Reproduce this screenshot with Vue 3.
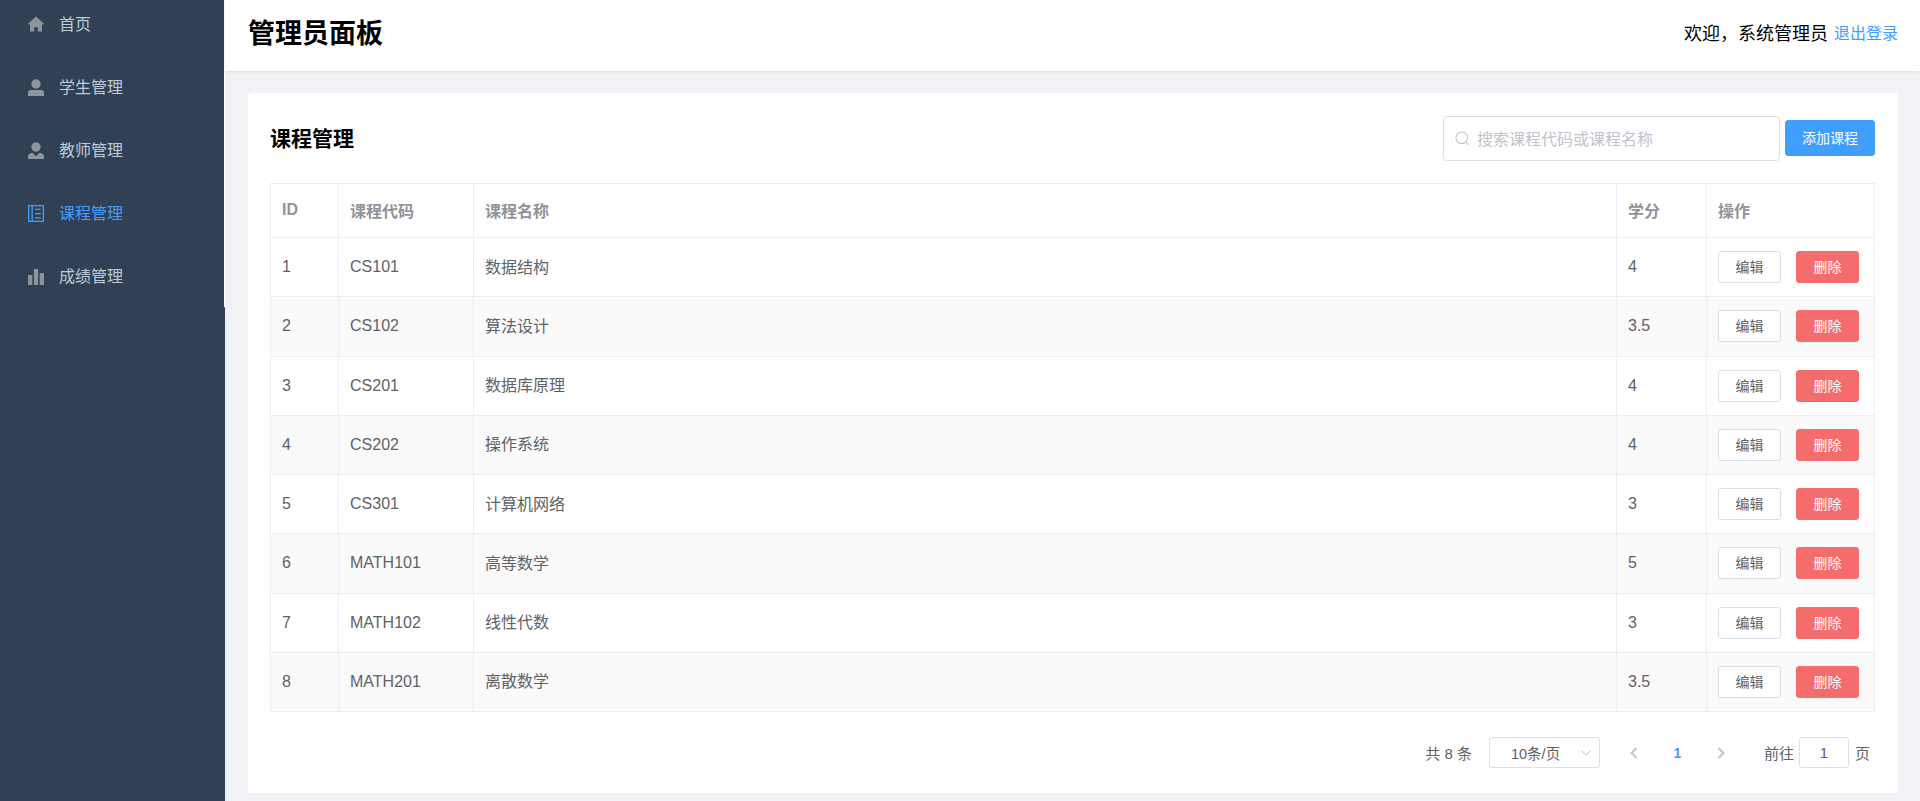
<script setup>
const menus = [
  { name: '首页', icon: 'home' },
  { name: '学生管理', icon: 'user' },
  { name: '教师管理', icon: 'teacher' },
  { name: '课程管理', icon: 'book', active: true },
  { name: '成绩管理', icon: 'chart' }
]
const courses = [
  { id: 1, code: 'CS101', name: '数据结构', credit: 4 },
  { id: 2, code: 'CS102', name: '算法设计', credit: 3.5 },
  { id: 3, code: 'CS201', name: '数据库原理', credit: 4 },
  { id: 4, code: 'CS202', name: '操作系统', credit: 4 },
  { id: 5, code: 'CS301', name: '计算机网络', credit: 3 },
  { id: 6, code: 'MATH101', name: '高等数学', credit: 5 },
  { id: 7, code: 'MATH102', name: '线性代数', credit: 3 },
  { id: 8, code: 'MATH201', name: '离散数学', credit: 3.5 }
]
</script>

<template>
  <div class="layout">
    <aside class="sidebar">
      <ul class="menu">
        <li v-for="m in menus" :key="m.name" class="menu-item" :class="{ active: m.active }">
          <svg class="menu-icon" viewBox="0 0 16 17">
            <path v-if="m.icon === 'home'" d="M8 .5 15.800 7.500c.3.3.2.8-.2.8H14V15.500H9.800V11.300H6.200V15.500H2V8.300H.4c-.4 0-.5-.5-.2-.8z" />
            <template v-else-if="m.icon === 'user'">
              <circle cx="8" cy="5" r="4.700" />
              <path d="M3 11h10c1.800 0 3 1.200 3 3v3H0v-3c0-1.800 1.200-3 3-3z" />
            </template>
            <template v-else-if="m.icon === 'teacher'">
              <circle cx="8" cy="5" r="4.700" />
              <path d="M4.500 10.800 8 14.200l3.500-3.400c2.800.5 4.500 1.800 4.500 3.700V17H0v-2.500c0-1.900 1.700-3.200 4.500-3.700z" />
            </template>
            <path v-else-if="m.icon === 'book'" fill-rule="evenodd" d="M0 0h16v17H0zM1.300 1.300v14.400h2.200V1.300zM4.800 1.300v14.400h9.900V1.300zM7 3.700h5.700v1.300H7zM7 8h5.700v1.300H7zM7 12.200h5.700v1.300H7z" />
            <path v-else d="M0 7h4.300v10H0zM5.900 1h4.200v16H5.900zM11.700 5H16v12h-4.300z" />
          </svg>
          <span>{{ m.name }}</span>
        </li>
      </ul>
    </aside>
    <div class="right">
      <header class="topbar">
        <h1>管理员面板</h1>
        <div class="user">
          <span>欢迎，系统管理员</span>
          <a>退出登录</a>
        </div>
      </header>
      <main class="content">
        <section class="card">
          <div class="card-head">
            <h2>课程管理</h2>
            <div class="tools">
              <div class="search">
                <svg viewBox="0 0 16 16" class="search-icon">
                  <circle cx="7.200" cy="7.200" r="6.200" />
                  <path d="m11.800 11.800 3.200 3.200" />
                </svg>
                <span>搜索课程代码或课程名称</span>
              </div>
              <button class="btn primary">添加课程</button>
            </div>
          </div>
          <table class="table">
            <colgroup>
              <col style="width: 68px" />
              <col style="width: 135px" />
              <col />
              <col style="width: 90px" />
              <col style="width: 168px" />
            </colgroup>
            <thead>
              <tr>
                <th>ID</th>
                <th>课程代码</th>
                <th>课程名称</th>
                <th>学分</th>
                <th>操作</th>
              </tr>
            </thead>
            <tbody>
              <tr v-for="c in courses" :key="c.id">
                <td>{{ c.id }}</td>
                <td>{{ c.code }}</td>
                <td class="cn">{{ c.name }}</td>
                <td>{{ c.credit }}</td>
                <td>
                  <div class="ops">
                    <button class="btn small">编辑</button>
                    <button class="btn small danger">删除</button>
                  </div>
                </td>
              </tr>
            </tbody>
          </table>
          <div class="pager">
            <span class="total">共 8 条</span>
            <div class="size">
              <span>10条/页</span>
              <svg viewBox="0 0 10 6" class="caret"><path d="m.5.500 4.500 4.500 4.500-4.500" /></svg>
            </div>
            <svg viewBox="0 0 8 12" class="arrow"><path d="M6.500 1 1.500 6l5 5" /></svg>
            <span class="num">1</span>
            <svg viewBox="0 0 8 12" class="arrow"><path d="m1.500 1 5 5-5 5" /></svg>
            <span class="goto">前往</span>
            <span class="jump">1</span>
            <span>页</span>
          </div>
        </section>
      </main>
    </div>
  </div>
</template>

<style>
html, body {
  margin: 0;
  overflow: hidden;
}
</style>

<style scoped>
.layout {
  display: flex;
  height: 809px;
  margin-top: -8px;
  overflow: hidden;
  font-family: "Liberation Sans", "Noto Sans CJK SC", sans-serif;
  background: #f0f2f5;
  color: #606266;
}
.sidebar {
  width: 225px;
  flex: none;
  background: #304156;
  overflow: hidden;
}
.menu {
  list-style: none;
  margin: 0;
  padding: 0;
  border-right: 1px solid #fff;
}
.menu-item {
  height: 63px;
  display: flex;
  align-items: center;
  padding-left: 28px;
  gap: 15px;
  font-size: 16px;
  color: #bfcbd9;
}
.menu-item span {
  margin-bottom: 2px;
}
.menu-item.active {
  color: #409eff;
}
.menu-icon {
  width: 16px;
  height: 17px;
  margin-top: 2px;
  fill: #909399;
}
.active .menu-icon {
  fill: #409eff;
}
.right {
  flex: 1;
  min-width: 0;
  display: flex;
  flex-direction: column;
}
.topbar {
  height: 79px;
  flex: none;
  background: #fff;
  box-shadow: 0 1px 4px rgba(0, 21, 41, 0.08);
  display: flex;
  align-items: center;
  justify-content: space-between;
  padding: 0 22px 0 23px;
  position: relative;
}
.topbar h1 {
  margin: 0;
  font-size: 27px;
  color: #000;
}
.user {
  font-size: 18px;
  color: #000;
  display: flex;
  align-items: center;
  gap: 6px;
}
.user a {
  font-size: 16px;
  color: #409eff;
}
.content {
  padding: 22px 22px 0 23px;
}
.card {
  background: #fff;
  border-radius: 4px;
  height: 700px;
  padding: 0 23px 0 22px;
  box-sizing: border-box;
}
.card-head {
  height: 90px;
  display: flex;
  align-items: center;
  justify-content: space-between;
}
.card-head h2 {
  margin: 0 0 2px;
  font-size: 21px;
  color: #000;
}
.tools {
  display: flex;
  align-items: center;
  gap: 5px;
}
.search {
  width: 337px;
  height: 45px;
  box-sizing: border-box;
  border: 1px solid #dcdfe6;
  border-radius: 4px;
  display: flex;
  align-items: center;
  gap: 7px;
  padding-left: 11px;
  font-size: 16px;
  color: #c0c4cc;
}
.search-icon {
  width: 15px;
  height: 15px;
  fill: none;
  stroke: #c0c4cc;
  stroke-width: 1.2;
}
.btn {
  font-family: inherit;
  border-radius: 3px;
  border: 1px solid #dcdfe6;
  background: #fff;
  color: #606266;
  font-size: 14px;
  padding: 0 0 2px;
  cursor: pointer;
}
.btn.primary {
  width: 90px;
  height: 36px;
  background: #409eff;
  border-color: #409eff;
  color: #fff;
}
.table {
  width: 100%;
  table-layout: fixed;
  border-collapse: collapse;
  font-size: 16px;
}
.table th,
.table td {
  border: 1px solid #ebeef5;
  padding: 0 0 0 11px;
  text-align: left;
}
.table th {
  height: 51px;
  padding-bottom: 2px;
  font-weight: 700;
  color: #909399;
}
.table td {
  height: 58.250px;
}
.table td.cn {
  height: 55.250px;
  padding-bottom: 3px;
}
.table tbody tr:nth-child(even) td {
  background: #fafafa;
}
.ops {
  display: flex;
  gap: 15px;
}
.btn.small {
  width: 63px;
  height: 32px;
}
.btn.danger {
  background: #f56c6c;
  border-color: #f56c6c;
  color: #fff;
}
.pager {
  display: flex;
  align-items: center;
  justify-content: flex-end;
  margin-top: 25px;
  padding-right: 5px;
  font-size: 15px;
  color: #606266;
}
.total {
  margin-right: 17px;
}
.size {
  width: 111px;
  height: 31px;
  box-sizing: border-box;
  border: 1px solid #dcdfe6;
  border-radius: 3px;
  display: flex;
  align-items: center;
  justify-content: space-between;
  padding: 0 8px 0 21px;
  margin-right: 30px;
  font-size: 14.500px;
}
.caret {
  width: 10px;
  height: 6px;
  fill: none;
  stroke: #c0c4cc;
  stroke-width: 1;
}
.arrow {
  width: 8px;
  height: 12px;
  fill: none;
  stroke: #c0c4cc;
  stroke-width: 2;
}
.num {
  width: 79px;
  text-align: center;
  font-weight: 700;
  color: #409eff;
  font-size: 14px;
}
.goto {
  margin-left: 39px;
  margin-right: 5px;
}
.jump {
  width: 50px;
  height: 31px;
  box-sizing: border-box;
  border: 1px solid #dcdfe6;
  border-radius: 3px;
  display: flex;
  align-items: center;
  justify-content: center;
  margin-right: 6px;
}
</style>
